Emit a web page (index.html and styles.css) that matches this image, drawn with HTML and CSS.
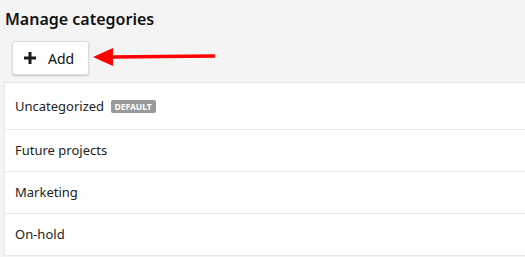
FILE: index.html
```html
<!DOCTYPE html>
<html lang="en">
<head>
    <meta charset="UTF-8">
    <meta name="viewport" content="width=device-width, initial-scale=1.0">
    <title>Manage categories</title>
    <link rel="stylesheet" href="styles.css">
</head>
<body>
    <h2 class="title">Manage categories</h2>

    <div class="toolbar">
        <button class="add-button">
            <svg class="plus" width="12" height="12" viewBox="0 0 12 12">
                <path d="M6 0v12M0 6h12" stroke="#1a1a1a" stroke-width="3"/>
            </svg>
            Add
        </button>
        <svg class="arrow" width="122" height="18" viewBox="0 0 122 18">
            <polygon points="0,9 20,0 20,18" fill="#f00"/>
            <line x1="18" y1="9" x2="121" y2="8" stroke="#f00" stroke-width="3.5" stroke-linecap="round"/>
        </svg>
    </div>

    <ul class="category-list">
        <li class="category first">Uncategorized <span class="badge">Default</span></li>
        <li class="category">Future projects</li>
        <li class="category">Marketing</li>
        <li class="category">On-hold</li>
    </ul>
</body>
</html>
```

FILE: styles.css
```css
body {
    margin: 0;
    font-family: "Noto Sans", "Open Sans", sans-serif;
    background-color: #f4f4f4;
    color: #1a1a1a;
}
.title {
    margin: 0;
    padding: 9px 5px 0 5px;
    font-size: 16px;
    font-weight: 600;
    line-height: 20px;
    color: #111;
}
.toolbar {
    display: flex;
    align-items: center;
    gap: 4px;
    padding-left: 12px;
    margin-top: 12px;
}
.add-button {
    display: flex;
    align-items: center;
    gap: 12px;
    height: 34px;
    width: 77px;
    padding: 0 0 0 11px;
    background: #fff;
    border: 1px solid #dcdcdc;
    border-radius: 3px;
    box-shadow: 0 1px 2px rgba(0, 0, 0, 0.18);
    font-family: inherit;
    font-size: 14px;
    color: #111;
}
.arrow {
    margin-top: -2px;
}
.category-list {
    list-style: none;
    margin: 7px 0 0 4px;
    padding: 0;
    background: #fff;
    border-top: 1px solid #e6e6e6;
    border-left: 1px solid #e6e6e6;
}
.category {
    height: 41px;
    line-height: 41px;
    padding-left: 10px;
    font-size: 13px;
    color: #222;
    border-bottom: 1px solid #e8e8e8;
}
.category.first {
    height: 46px;
    line-height: 46px;
}
.badge {
    display: inline-block;
    vertical-align: 1px;
    margin-left: 3px;
    padding: 0 4px;
    height: 13px;
    line-height: 13px;
    background: #999;
    color: #fff;
    border-radius: 2px;
    font-size: 8.5px;
    font-weight: 700;
    text-transform: uppercase;
}
```
